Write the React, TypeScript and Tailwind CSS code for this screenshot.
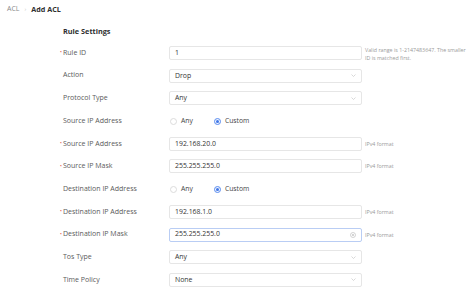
import React from 'react';

type Row =
  | { kind: 'input'; label: string; req?: boolean; value: string; help?: string; focused?: boolean }
  | { kind: 'select'; label: string; req?: boolean; value: string }
  | { kind: 'radio'; label: string; value: 'any' | 'custom' };

const rows: Row[] = [
  { kind: 'input', label: 'Rule ID', req: true, value: '1', help: 'Valid range is 1-2147483647. The smaller ID is matched first.' },
  { kind: 'select', label: 'Action', value: 'Drop' },
  { kind: 'select', label: 'Protocol Type', value: 'Any' },
  { kind: 'radio', label: 'Source IP Address', value: 'custom' },
  { kind: 'input', label: 'Source IP Address', req: true, value: '192.168.20.0', help: 'IPv4 format' },
  { kind: 'input', label: 'Source IP Mask', req: true, value: '255.255.255.0', help: 'IPv4 format' },
  { kind: 'radio', label: 'Destination IP Address', value: 'custom' },
  { kind: 'input', label: 'Destination IP Address', req: true, value: '192.168.1.0', help: 'IPv4 format' },
  { kind: 'input', label: 'Destination IP Mask', req: true, value: '255.255.255.0', help: 'IPv4 format', focused: true },
  { kind: 'select', label: 'Tos Type', value: 'Any' },
  { kind: 'select', label: 'Time Policy', value: 'None' },
];

const Chevron = () => (
  <svg width="5" height="3" viewBox="0 0 10 6" fill="none" stroke="#c4c4c4" strokeWidth="1.3">
    <path d="M1 1l4 4 4-4" />
  </svg>
);

const ClearIcon = () => (
  <svg width="6" height="6" viewBox="0 0 12 12" fill="none" stroke="#a9a9a9" strokeWidth="1">
    <circle cx="6" cy="6" r="5" />
    <path d="M4 4l4 4M8 4l-4 4" />
  </svg>
);

const Radio = ({ checked, text }: { checked: boolean; text: string }) => (
  <div className="flex items-center gap-[4px]">
    <span
      className={
        checked
          ? 'w-[7px] h-[7px] rounded-full border border-[#5b8def] bg-[#eef3fd] flex items-center justify-center'
          : 'w-[7px] h-[7px] rounded-full border border-[#dcdcdc] bg-white'
      }
    >
      {checked && <span className="w-[3px] h-[3px] rounded-full bg-[#3f76e8]" />}
    </span>
    <span className="text-[6.8px] text-[#444]">{text}</span>
  </div>
);

const App: React.FC = () => {
  return (
    <div className="w-[474px] h-[293px] bg-white overflow-hidden font-['Open_Sans',sans-serif]">
      {/* breadcrumb */}
      <div className="h-[18px] flex items-center pl-[7px] text-[7px]">
        <span className="text-[#8a8a8a]">ACL</span>
        <span className="text-[#c8c8c8] mx-[5px] text-[6px]">›</span>
        <span className="font-bold text-[#2f2f2f] text-[7.2px]">Add ACL</span>
      </div>

      <div className="pl-[63px] pt-[6px] h-[28px] text-[7.3px] font-bold text-[#2f2f2f] leading-[14px]">Rule Settings</div>

      <div className="flex flex-col gap-y-[8.7px]">
        {rows.map((r, i) => (
          <div key={i} className="flex h-[14px] items-center">
            <div className="w-[169px] shrink-0 pl-[60px] flex items-center text-[7px] text-[#5a5a5a] whitespace-nowrap">
              <span className="w-[3px] shrink-0 text-[#e0534a] text-[5px]">{'req' in r && r.req ? '•' : ''}</span>
              <span>{r.label}</span>
            </div>

            {r.kind === 'radio' ? (
              <div className="flex items-center gap-[21px] pl-[1px]">
                <Radio checked={r.value === 'any'} text="Any" />
                <Radio checked={r.value === 'custom'} text="Custom" />
              </div>
            ) : (
              <div
                className={
                  'w-[193px] shrink-0 h-[14px] rounded-[2px] border flex items-center justify-between px-[5px] ' +
                  (r.kind === 'input' && r.focused ? 'border-[#b9cdf4]' : 'border-[#e6e6e6]')
                }
              >
                <span className="text-[6.9px] text-[#333]">{r.value}</span>
                {r.kind === 'select' && <Chevron />}
                {r.kind === 'input' && r.focused && <ClearIcon />}
              </div>
            )}

            {r.kind === 'input' && r.help && (
              <div
                className={
                  'ml-[3px] text-[5.3px] text-[#9a9a9a] leading-[8px] ' +
                  (r.help.length > 20 ? 'w-[104px] self-start' : '')
                }
              >
                {r.help}
              </div>
            )}
          </div>
        ))}
      </div>
    </div>
  );
};

export default App;
